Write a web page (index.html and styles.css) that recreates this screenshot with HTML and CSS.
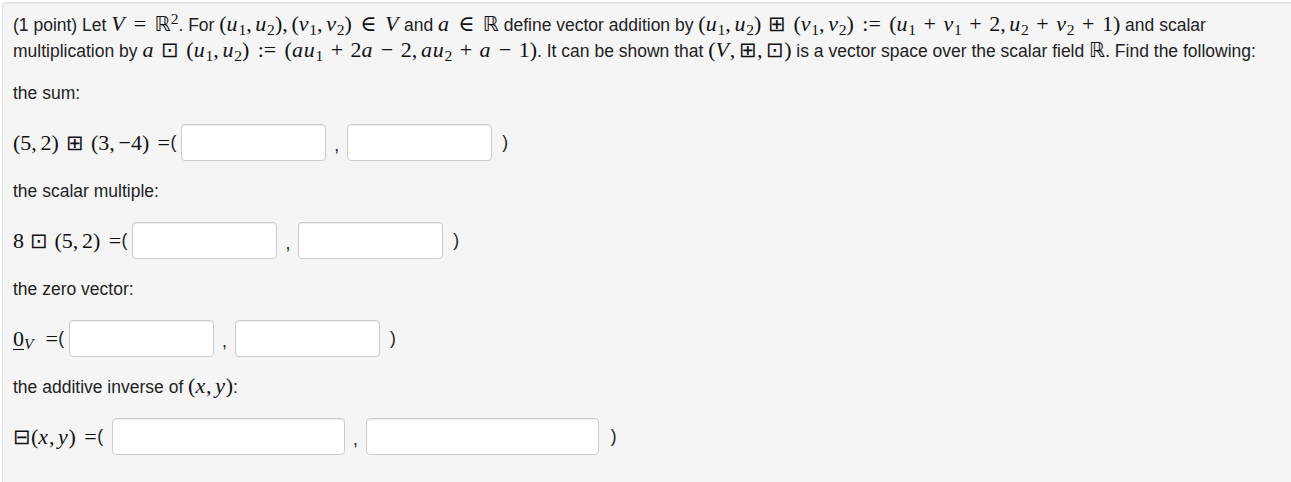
FILE: index.html
```html
<!DOCTYPE html>
<html>
<head>
<meta charset="utf-8">
<title>Vector space problem</title>
<link rel="stylesheet" href="styles.css">
</head>
<body>
<div class="well">
  <p class="intro">(1 point) Let <span class="m"><i>V</i><span class="r">=</span><b class="bb">ℝ</b><sup>2</sup></span>. For <span class="m">(<i>u</i><sub>1</sub><span class="c">,</span><i>u</i><sub>2</sub>)<span class="c">,</span>(<i>v</i><sub>1</sub><span class="c">,</span><i>v</i><sub>2</sub>)<span class="r">∈</span><i>V</i></span> and <span class="m"><i>a</i><span class="r">∈</span><b class="bb">ℝ</b></span> define vector addition by <span class="m">(<i>u</i><sub>1</sub><span class="c">,</span><i>u</i><sub>2</sub>)<span class="b op">⊞</span>(<i>v</i><sub>1</sub><span class="c">,</span><i>v</i><sub>2</sub>)<span class="r">:=</span>(<i>u</i><sub>1</sub><span class="b">+</span><i>v</i><sub>1</sub><span class="b">+</span>2<span class="c">,</span><i>u</i><sub>2</sub><span class="b">+</span><i>v</i><sub>2</sub><span class="b">+</span>1)</span> and scalar multiplication by <span class="m"><i>a</i><span class="b op">⊡</span>(<i>u</i><sub>1</sub><span class="c">,</span><i>u</i><sub>2</sub>)<span class="r">:=</span>(<i>au</i><sub>1</sub><span class="b">+</span>2<i>a</i><span class="b">−</span>2<span class="c">,</span><i>au</i><sub>2</sub><span class="b">+</span><i>a</i><span class="b">−</span>1)</span>. It can be shown that <span class="m">(<i>V</i><span class="c">,</span><span class="op">⊞</span><span class="c">,</span><span class="op">⊡</span>)</span> is a vector space over the scalar field <span class="m"><b class="bb">ℝ</b></span>. Find the following:</p>

  <p class="label">the sum:</p>
  <div class="row">
    <span class="m">(5<span class="c">,</span>2)<span class="b op">⊞</span>(3<span class="c">,</span>−4)<span class="r end">=</span></span><span class="paren">(</span>
    <input class="ans" type="text" aria-label="sum first component">
    <span class="comma">,</span>
    <input class="ans" type="text" aria-label="sum second component">
    <span class="close">)</span>
  </div>

  <p class="label">the scalar multiple:</p>
  <div class="row">
    <span class="m">8<span class="b op tight">⊡</span>(5<span class="c">,</span>2)<span class="r end">=</span></span><span class="paren">(</span>
    <input class="ans" type="text" aria-label="scalar multiple first component">
    <span class="comma">,</span>
    <input class="ans" type="text" aria-label="scalar multiple second component">
    <span class="close">)</span>
  </div>

  <p class="label">the zero vector:</p>
  <div class="row">
    <span class="m"><span class="uline">0</span><sub class="subv"><i>V</i></sub><span class="r end">=</span></span><span class="paren">(</span>
    <input class="ans" type="text" aria-label="zero vector first component">
    <span class="comma">,</span>
    <input class="ans" type="text" aria-label="zero vector second component">
    <span class="close">)</span>
  </div>

  <p class="label">the additive inverse of <span class="m">(<i>x</i><span class="c">,</span><i>y</i>)</span>:</p>
  <div class="row">
    <span class="m"><span class="op">⊟</span>(<i>x</i><span class="c">,</span><i>y</i>)<span class="r end">=</span></span><span class="paren">(</span>
    <input class="ans wide" type="text" aria-label="additive inverse first component">
    <span class="comma">,</span>
    <input class="ans wide" type="text" aria-label="additive inverse second component">
    <span class="close far">)</span>
  </div>
</div>
</body>
</html>
```

FILE: styles.css
```css
html, body {
  margin: 0;
  padding: 0;
  background: #ffffff;
  overflow: hidden;
}

body {
  font-family: "Liberation Sans", Arial, sans-serif;
  font-size: 17.5px;
  color: #222222;
}

.well {
  margin: 2px -20px 0 2px;
  border: 1px solid #e3e3e3;
  border-radius: 4px;
  background: #f5f5f5;
  padding: 9px 30px 120px 10px;
  box-shadow: inset 0 1px 1px rgba(0, 0, 0, 0.05);
}

.intro {
  margin: 0 0 -1px;
  line-height: 26px;
}

.label {
  margin: 17px 0 0;
  line-height: 26px;
}

.row {
  display: flex;
  align-items: center;
  height: 37px;
  margin-top: 18px;
}

.m {
  font-family: "Liberation Serif", "DejaVu Serif", serif;
  font-size: 22px;
  line-height: 1;
  color: #111111;
  white-space: nowrap;
}

.m i {
  font-style: italic;
  letter-spacing: 0.035em;
}

.m sub,
.m sup {
  font-size: 0.707em;
  line-height: 0;
}

.m sub {
  vertical-align: -0.24em;
}

.m sup {
  vertical-align: 0.45em;
}

.m .subv {
  margin-right: 3px;
}

/* comma with thin space */
.c {
  margin-right: 0.167em;
}

/* binary operator spacing (CM widths are wider than Times) */
.b {
  margin: 0 0.34em;
}

.b.tight {
  margin: 0 0.3em;
}

/* relation spacing */
.r {
  margin: 0 0.38em;
}

.r.end {
  margin-right: 0.02em;
}

.bb {
  font-family: "DejaVu Sans", sans-serif;
  font-weight: normal;
  font-size: 0.92em;
}

.op {
  font-family: "DejaVu Sans", sans-serif;
  font-size: 0.95em;
  font-weight: 200;
}

.uline {
  text-decoration: underline;
  text-underline-offset: 3px;
  text-decoration-thickness: 1px;
}

.ans {
  box-sizing: border-box;
  width: 145px;
  height: 37px;
  margin: 0 0 0 5px;
  padding: 4px 6px;
  border: 1px solid #cccccc;
  border-radius: 4px;
  background: #ffffff;
  box-shadow: inset 0 1px 1px rgba(0, 0, 0, 0.075);
  font: inherit;
}

.ans.wide {
  width: 233px;
  margin-left: 9px;
}

.comma {
  padding: 6px 8px 0 8px;
}

.comma + .ans,
.comma + .ans.wide {
  margin-left: 0;
}

.close {
  margin-left: 10px;
}

.close.far {
  margin-left: 12px;
}
```
